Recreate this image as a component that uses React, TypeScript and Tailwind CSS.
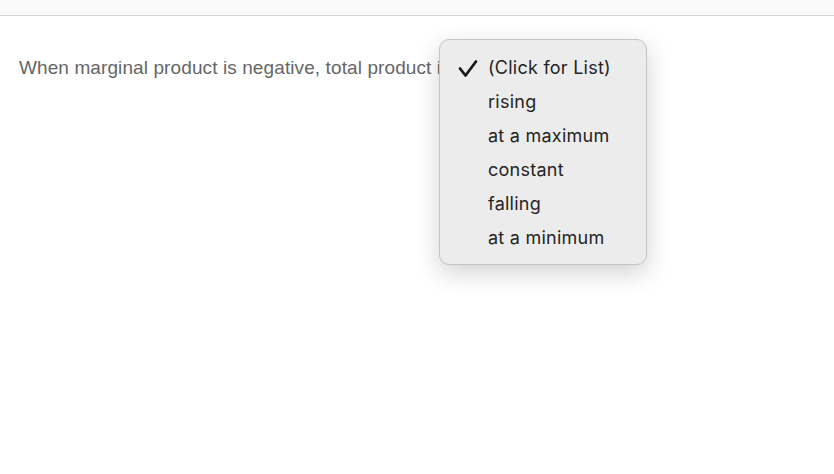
import React from "react";

const items = ["(Click for List)", "rising", "at a maximum", "constant", "falling", "at a minimum"];

export default function App() {
  return (
    <div className="relative w-[834px] h-[474px] bg-white overflow-hidden">
      <div className="h-[16px] bg-[#fafafa] border-b border-[#d6d6d6]" />
      <div className="pl-[19px] pt-[40px] text-[19px] tracking-[0.1px] text-[#666666] leading-[24px] whitespace-nowrap" style={{ fontFamily: '"Liberation Sans", Arial, sans-serif' }}>
        When marginal product is negative, total product is
      </div>
      <div
        className="absolute left-[439px] top-[39px] w-[208px] h-[226px] rounded-[10px] bg-[#ececec] border border-[#c4c4c4] shadow-[0_8px_24px_rgba(0,0,0,0.18)] pt-[10px]"
        style={{ fontFamily: 'Inter, "Noto Sans", sans-serif' }}
      >
        {items.map((t, i) => (
          <div key={t} className="relative h-[34px] flex items-center pl-[48px] text-[18px] tracking-[0.25px] text-[#242424]">
            {i === 0 && (
              <svg className="absolute left-[17px] top-[9px]" width="22" height="20" viewBox="0 0 22 20">
                <path d="M3 9.5 L8.5 16.5 L19 2.5" fill="none" stroke="#1a1a1a" strokeWidth="2.8" strokeLinecap="round" strokeLinejoin="round" />
              </svg>
            )}
            {t}
          </div>
        ))}
      </div>
    </div>
  );
}
